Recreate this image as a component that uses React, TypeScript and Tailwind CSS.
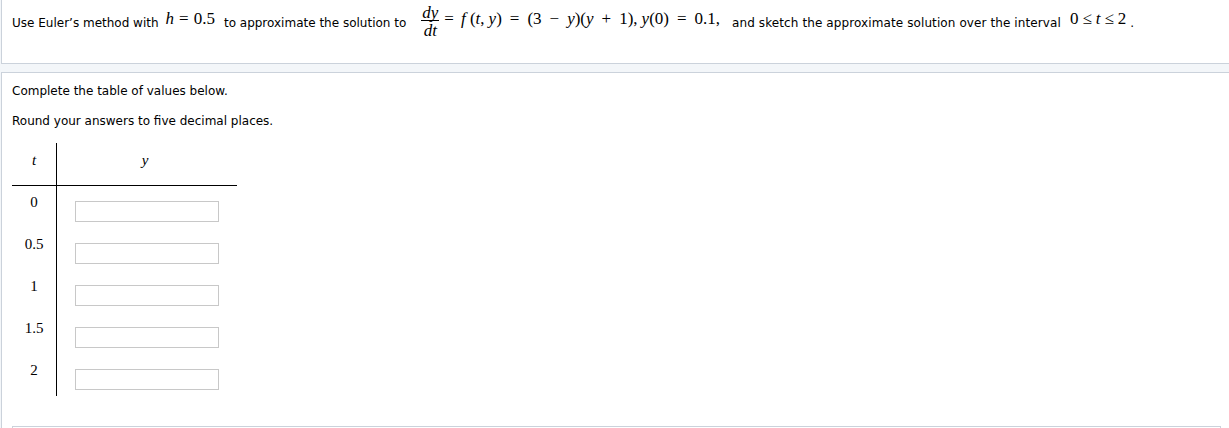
import React from "react";

const rows = ["0", "0.5", "1", "1.5", "2"];

function M({ children, className = "" }: { children: React.ReactNode; className?: string }) {
  return (
    <span className={`font-['Liberation_Serif',serif] text-[17px] ${className}`}>{children}</span>
  );
}

function I({ children }: { children: React.ReactNode }) {
  return <span className="italic">{children}</span>;
}

// operator with math spacing on both sides
function Op({ children, s = "mx-[8px]" }: { children: React.ReactNode; s?: string }) {
  return <span className={s}>{children}</span>;
}

export default function App() {
  return (
    <div className="h-[428px] w-[1229px] overflow-hidden bg-[#f3f6f9] font-['DejaVu_Sans',sans-serif] text-[12px] text-black">
      {/* Question prompt */}
      <div className="ml-px h-[64px] w-[1260px] border-b border-l border-[#cbd2db] bg-white pl-[10px]">
        <div className="whitespace-nowrap pt-[4px] leading-[30px]">
          <span>Use Euler’s method with</span>
          <M className="ml-[7px] mr-[9px] align-[3px]">
            <I>h</I>
            <Op s="mx-[5px]">=</Op>0.5
          </M>
          <span>to approximate the solution to</span>
          <span className="ml-[15px] mr-[5px] inline-flex flex-col items-center align-[9px] font-['Liberation_Serif',serif] text-[17px] leading-[13px]">
            <span className="border-b border-black px-px pb-px italic">dy</span>
            <span className="pt-[3px] italic">dt</span>
          </span>
          <M className="mr-[12px] align-[3px]">
            =<span className="ml-[7px]" />
            <I>f</I> (<I>t</I>,<span className="ml-[4px]" />
            <I>y</I>)<Op>=</Op>(3<Op>−</Op>
            <I>y</I>)(<I>y</I>
            <Op>+</Op>1),<span className="ml-[4px]" />
            <I>y</I>(0)<Op>=</Op>0.1,
          </M>
          <span className="tracking-[0.1px]">and sketch the approximate solution over the interval</span>
          <M className="ml-[9px] align-[3px]">
            0<Op s="mx-[4px]">≤</Op>
            <I>t</I>
            <Op s="mx-[4px]">≤</Op>2
          </M>
          <span> .</span>
        </div>
      </div>

      {/* Answer area */}
      <div className="ml-px mt-[8px] w-[1260px] border-l border-t border-[#cbd2db] bg-white pl-[10px] pt-[9px]">
        <p className="leading-[18px]">Complete the table of values below.</p>
        <p className="mt-[12px] leading-[18px]">Round your answers to five decimal places.</p>

        <div className="mt-[13px] w-[225px] font-['Liberation_Serif',serif] text-[15px] leading-[18px]">
          <div className="flex h-[43px] border-b border-black">
            <div className="w-[45px] border-r border-black pt-[8px] text-center italic">t</div>
            <div className="flex-1 pr-[4px] pt-[8px] text-center italic">y</div>
          </div>
          {rows.map((r) => (
            <div key={r} className="flex h-[42px]">
              <div className="w-[45px] border-r border-black pt-[7px] text-center">{r}</div>
              <div className="flex-1 pl-[18px] pt-[15px]">
                <input
                  type="text"
                  className="block h-[21px] w-[144px] border border-[#c8c8c8] bg-white outline-none"
                />
              </div>
            </div>
          ))}
        </div>

        <div className="mt-[30px] h-[20px] w-[1209px] border-l border-r border-t border-[#cbd2db]" />
      </div>
    </div>
  );
}
